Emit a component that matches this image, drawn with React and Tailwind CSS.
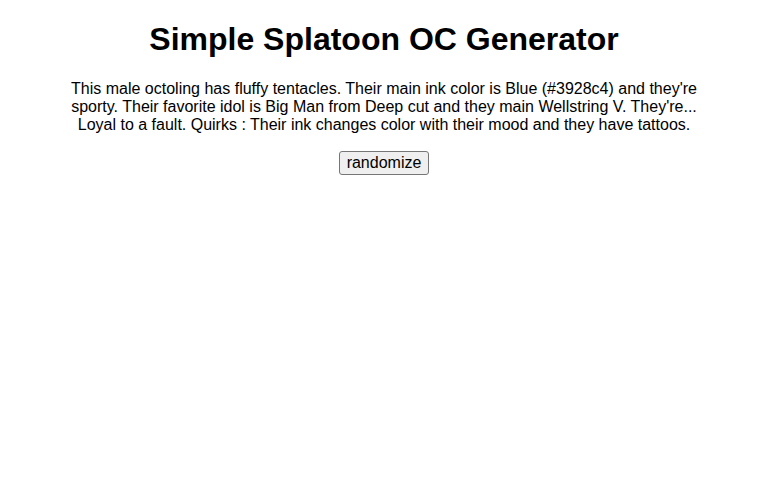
import React, { useState } from 'react'

const GENDERS = ['male', 'female', 'non-binary']
const SPECIES = ['octoling', 'inkling']
const HAIR = ['fluffy tentacles', 'short tentacles', 'long tentacles']

export default function App() {
  const [seed, setSeed] = useState(0)

  return (
    <div className="min-h-screen bg-white text-black font-['Liberation_Sans',Arial,sans-serif] text-center">
      <h1 className="text-[32px] leading-[36.8px] font-bold pt-[21.44px] mb-[21.44px]">
        Simple Splatoon OC Generator
      </h1>
      <p className="w-[640px] mx-auto text-[16px] leading-[18.4px]">
        This {GENDERS[seed % 3]} {SPECIES[0]} has {HAIR[0]}. Their main ink color is Blue (#3928c4) and they're sporty. Their favorite idol is Big Man from Deep cut and they main Wellstring V. They're... Loyal to a fault. Quirks : Their ink changes color with their mood and they have tattoos.
      </p>
      <button
        type="button"
        onClick={() => setSeed(0)}
        className="mt-[16px] w-[90px] h-[24px] text-[16px] leading-[18px] bg-[#efefef] border border-[#767676] rounded-[3px] text-black"
      >
        randomize
      </button>
    </div>
  )
}
